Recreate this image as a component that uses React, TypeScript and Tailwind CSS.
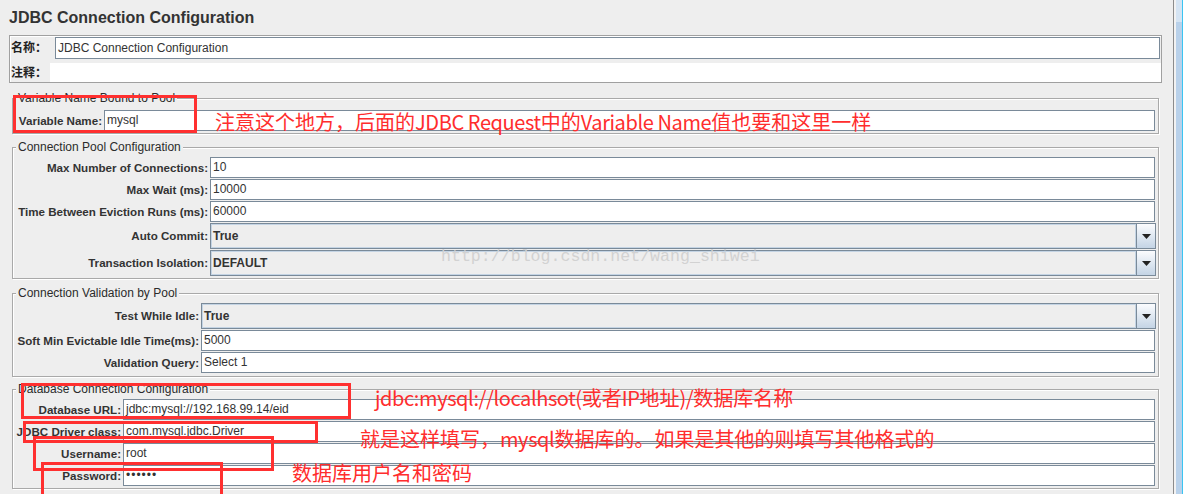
import React from "react";

type Row = { label: string; value: string; kind?: "text" | "combo" | "password" };

const poolRows: Row[] = [
  { label: "Max Number of Connections:", value: "10" },
  { label: "Max Wait (ms):", value: "10000" },
  { label: "Time Between Eviction Runs (ms):", value: "60000" },
  { label: "Auto Commit:", value: "True", kind: "combo" },
  { label: "Transaction Isolation:", value: "DEFAULT", kind: "combo" },
];

const validationRows: Row[] = [
  { label: "Test While Idle:", value: "True", kind: "combo" },
  { label: "Soft Min Evictable Idle Time(ms):", value: "5000" },
  { label: "Validation Query:", value: "Select 1" },
];

const databaseRows: Row[] = [
  { label: "Database URL:", value: "jdbc:mysql://192.168.99.14/eid" },
  { label: "JDBC Driver class:", value: "com.mysql.jdbc.Driver" },
  { label: "Username:", value: "root" },
  { label: "Password:", value: "••••••", kind: "password" },
];

function Combo({ value }: { value: string }) {
  return (
    <div className="-mr-[1px] flex h-[26px] border border-[#7a8a99]">
      <div className="flex-1 bg-[#eeeeee] pl-[2px] text-[12px] font-bold leading-[24px] text-[#333] shadow-[inset_0_0_0_1px_#c4d4e4]">
        {value}
      </div>
      <div className="flex w-[19px] items-center justify-center border-l border-[#7a8a99] bg-gradient-to-b from-[#fbfcfe] to-[#c4d4e5]">
        <svg width="9" height="5" viewBox="0 0 9 5">
          <path d="M0 0h9L4.5 5z" fill="#222" />
        </svg>
      </div>
    </div>
  );
}

function Field({ row }: { row: Row }) {
  if (row.kind === "combo") return <Combo value={row.value} />;
  return (
    <div
      className={
        "h-[21px] border border-[#7a8a99] bg-white pl-[2px] text-[12px] leading-[19px] text-[#333] " +
        (row.kind === "password" ? "tracking-[1px]" : "")
      }
    >
      {row.value}
    </div>
  );
}

function Group({
  title,
  rows,
  cols,
  className,
}: {
  title: string;
  rows: Row[];
  cols: string;
  className: string;
}) {
  return (
    <fieldset
      className={
        "mx-[3px] border border-[#a9a9a9] px-[3px] shadow-[inset_1px_1px_0_#fff,1px_1px_0_#fff] " + className
      }
    >
      <legend className="bg-[#eeeeee] px-[2px] text-[12px] leading-[14px] text-[#2b2b2b]">{title}</legend>
      <div className={"grid items-center gap-x-[2px] gap-y-[1px] " + cols}>
        {rows.map((r) => (
          <React.Fragment key={r.label}>
            <span className="whitespace-nowrap text-right text-[11.6px] font-bold text-[#333]">{r.label}</span>
            <Field row={r} />
          </React.Fragment>
        ))}
      </div>
    </fieldset>
  );
}

// latin runs inside the red notes are set a touch tighter
function L({ children }: { children: React.ReactNode }) {
  return <span className="tracking-[-0.4px]">{children}</span>;
}

const note =
  "absolute whitespace-nowrap font-['Noto_Sans_CJK_SC',sans-serif] text-[20px] leading-[20px] text-[#ff2d2d]";
const box = "pointer-events-none absolute border-[3px] border-[#ff3030]";

export default function App() {
  return (
    <div className="flex h-[494px] w-[1183px] overflow-hidden bg-[#eeeeee] font-['Liberation_Sans','Noto_Sans_CJK_SC',sans-serif]">
      <div className="relative flex w-[1173px] flex-col pl-[9px] pr-[11px]">
        <h1 className="h-[35px] pt-[8px] text-[16px] font-bold leading-[20px] text-[#333]">
          JDBC Connection Configuration
        </h1>

        <div className="flex h-[48px] flex-col border border-[#a0a0a0] shadow-[inset_1px_1px_0_#fff]">
          <div className="mt-[1px] flex h-[22px] items-center">
            <span className="w-[45px] pl-[1px] text-[12px] font-bold text-[#222]">名称：</span>
            <div className="mr-[1px] h-[22px] flex-1 border border-[#7a8a99] bg-white pl-[2px] text-[12px] leading-[20px] text-[#333]">
              JDBC Connection Configuration
            </div>
          </div>
          <div className="mt-[4px] flex h-[19px] items-center">
            <span className="w-[40px] pl-[1px] text-[12px] font-bold text-[#222]">注释：</span>
            <div className="h-full flex-1 bg-white" />
          </div>
        </div>

        <Group
          title="Variable Name Bound to Pool"
          rows={[{ label: "Variable Name:", value: "mysql" }]}
          cols="grid-cols-[86px_1fr]"
          className="mt-[8px] pt-[5px] pb-[2px]"
        />
        <Group
          title="Connection Pool Configuration"
          rows={poolRows}
          cols="grid-cols-[192px_1fr]"
          className="mt-[6px] pt-[3px] pb-[2px]"
        />
        <Group
          title="Connection Validation by Pool"
          rows={validationRows}
          cols="grid-cols-[183px_1fr]"
          className="mt-[7px] pt-[3px] pb-[3px]"
        />
        <Group
          title="Database Connection Configuration"
          rows={databaseRows}
          cols="grid-cols-[105px_1fr]"
          className="mt-[5px] pt-[3px] pb-[2px]"
        />

        {/* blog watermark */}
        <span className="pointer-events-none absolute left-[441px] top-[248px] whitespace-nowrap font-['Liberation_Mono',monospace] text-[16.6px] leading-[17px] text-[#d2d2d2]">
          http://blog.csdn.net/wang_shiwei
        </span>

        {/* red notes */}
        <div className={box + " left-[13px] top-[95px] h-[38px] w-[184px]"} />
        <div className={box + " left-[21px] top-[383px] h-[36px] w-[330px]"} />
        <div className={box + " left-[23px] top-[421px] h-[22px] w-[295px]"} />
        <div className={box + " left-[33px] top-[436px] h-[35px] w-[241px]"} />
        <div className={box + " left-[41px] top-[462px] h-[40px] w-[182px]"} />

        <span className={note + " left-[215px] top-[112px]"}>
          注意这个地方，后面的<L>JDBC Request</L>中的<L>Variable Name</L>值也要和这里一样
        </span>
        <span className={note + " left-[375px] top-[388px]"}>
          <L>jdbc:mysql://localhsot(</L>或者<L>IP</L>地址<L>)/</L>数据库名称
        </span>
        <span className={note + " left-[360px] top-[429px]"}>
          就是这样填写，<L>mysql</L>数据库的。如果是其他的则填写其他格式的
        </span>
        <span className={note + " left-[292px] top-[463px]"}>数据库用户名和密码</span>
      </div>

      {/* right edge scrollbar */}
      <div className="flex w-[10px] border-l border-[#8c8c8c]">
        <div className="w-[2px] bg-[#f2f2f2]" />
        <div className="flex flex-1 flex-col border-r border-[#3ac4f2]">
          <div className="h-[22px] bg-[#d5e4f3]" />
          <div className="flex-1 bg-[#b9d1ea]" />
        </div>
      </div>
    </div>
  );
}
